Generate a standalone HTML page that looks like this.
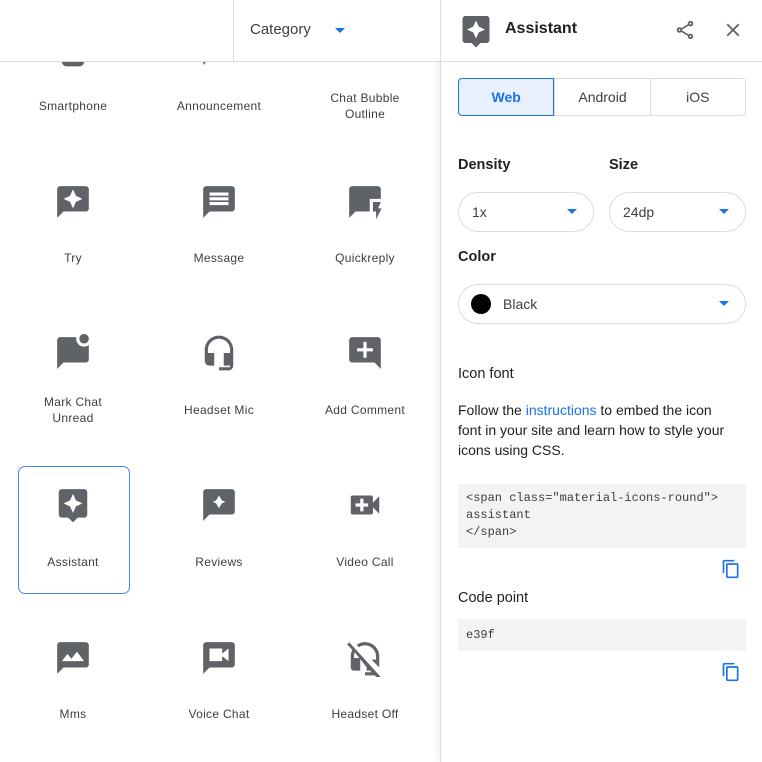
<!DOCTYPE html>
<html><head><meta charset="utf-8"><style>
*{box-sizing:border-box;margin:0;padding:0}
body{width:762px;height:762px;overflow:hidden;background:#fff;font-family:"Liberation Sans",Arial,sans-serif;position:relative;color:#202124}
.left{position:absolute;left:0;top:0;width:440px;height:762px;overflow:hidden}
.hdr{position:absolute;left:0;top:0;width:440px;height:62px;background:#fff;border-bottom:1px solid #dadce0;z-index:2}
.vd{position:absolute;left:233px;top:0;width:1px;height:61px;background:#dadce0}
.cat{position:absolute;left:250px;top:21px;font-size:15px;color:#3c4043}
.tri{position:absolute;width:0;height:0;border-left:5px solid transparent;border-right:5px solid transparent;border-top:5px solid #1a73e8}
.cell{position:absolute;width:112px;text-align:center}
.cell svg{position:absolute;left:37px;width:38px;height:38px;fill:#5f6368}
.lbl{position:absolute;left:0;width:112px;font-size:12px;color:#3c4043;line-height:16px;letter-spacing:.3px}
.sel{position:absolute;left:18px;top:466px;width:112px;height:128px;border:1px solid #4285f4;border-radius:7px}
.right{position:absolute;left:440px;top:0;width:322px;height:762px;border-left:1px solid #dadce0;box-shadow:-3px 0 5px rgba(0,0,0,.05);background:#fff}
.rh{position:absolute;left:0;top:61px;width:322px;height:1px;background:#dadce0}
.tabs{position:absolute;left:17px;top:78px;width:288px;height:38px;border:1px solid #dadce0;border-radius:4px;display:flex;font-size:14px;color:#3c4043}
.tabs div{flex:1;text-align:center;line-height:36px;border-left:1px solid #dadce0}
.tabs div:first-child{border:1px solid #1a73e8;background:#e8f0fe;color:#1a73e8;font-weight:bold;border-radius:4px 0 0 4px;margin:-1px 0 -1px -1px;line-height:36px}
.h{position:absolute;font-size:14.5px;font-weight:bold;color:#202124}
.s{position:absolute;height:40px;border:1px solid #dadce0;border-radius:20px;font-size:14px;color:#3c4043;line-height:38px;padding-left:13px}
.p{position:absolute;left:17px;top:400px;width:276px;font-size:14px;line-height:20px;color:#202124}
.code{position:absolute;left:17px;width:288px;background:#f1f3f4;font-family:"Liberation Mono",monospace;font-size:12px;color:#3c4043;padding-left:8px;line-height:17px}
.cp{position:absolute;width:20px;height:20px}
</style></head><body>
<div class="left">
<div class="hdr"><div class="vd"></div><div class="cat">Category</div><div class="tri" style="left:335px;top:28px"></div></div>

<div class="cell" style="left:17px;top:0"><svg viewBox="0 0 24 24" style="top:30px"><path d="M16 1H8C6.34 1 5 2.34 5 4v16c0 1.66 1.34 3 3 3h8c1.66 0 3-1.34 3-3V4c0-1.66-1.34-3-3-3z"/></svg><div class="lbl" style="top:98px">Smartphone</div></div>
<div class="cell" style="left:163px;top:0"><svg viewBox="0 0 24 24" style="top:30px"><path d="M20 2H4c-1.1 0-1.99.9-1.99 2L2 22l4-4h14c1.1 0 2-.9 2-2V4c0-1.1-.9-2-2-2z"/></svg><div class="lbl" style="top:98px">Announcement</div></div>
<div class="cell" style="left:309px;top:0"><div class="lbl" style="top:90px">Chat Bubble<br>Outline</div></div>

<div class="cell" style="left:17px;top:0"><svg viewBox="0 0 24 24" style="top:183px"><path d="M20 2H4c-1.1 0-2 .9-2 2v18l4-4h14c1.1 0 2-.9 2-2V4c0-1.1-.9-2-2-2zm-6.12 9.88L12 16l-1.88-4.12L6 10l4.12-1.88L12 4l1.88 4.12L18 10l-4.12 1.88z"/></svg><div class="lbl" style="top:250px">Try</div></div>
<div class="cell" style="left:163px;top:0"><svg viewBox="0 0 24 24" style="top:183px"><path d="M20 2H4c-1.1 0-1.99.9-1.99 2L2 22l4-4h14c1.1 0 2-.9 2-2V4c0-1.1-.9-2-2-2zm-2 12H6v-2h12v2zm0-3H6V9h12v2zm0-3H6V6h12v2z"/></svg><div class="lbl" style="top:250px">Message</div></div>
<div class="cell" style="left:309px;top:0"><svg viewBox="0 0 24 24" style="top:183px"><path d="M22 4c0-1.1-.9-2-2-2H4c-1.1 0-1.99.9-1.99 2L2 22l4-4h9v-8h7V4zM22.5 16h-2.2l1.7-4h-5v6h2v5z"/></svg><div class="lbl" style="top:250px">Quickreply</div></div>

<div class="cell" style="left:17px;top:0"><svg viewBox="0 0 24 24" style="top:334px"><path d="M22 6.98V16c0 1.1-.9 2-2 2H6l-4 4V4c0-1.1.9-2 2-2h10.1c-.06.32-.1.66-.1 1 0 2.760 2.24 5 5 5 1.13 0 2.16-.39 3-1.02zM16 3c0 1.66 1.34 3 3 3s3-1.34 3-3-1.34-3-3-3-3 1.34-3 3z"/></svg><div class="lbl" style="top:394px">Mark Chat<br>Unread</div></div>
<div class="cell" style="left:163px;top:0"><svg viewBox="0 0 24 24" style="top:334px"><path d="M12 1c-4.97 0-9 4.03-9 9v7c0 1.66 1.34 3 3 3h3v-8H5v-2c0-3.87 3.13-7 7-7s7 3.13 7 7v2h-4v8h4v1h-7v2h6c1.66 0 3-1.34 3-3V10c0-4.97-4.03-9-9-9z"/></svg><div class="lbl" style="top:402px">Headset Mic</div></div>
<div class="cell" style="left:309px;top:0"><svg viewBox="0 0 24 24" style="top:334px"><path d="M22 4c0-1.1-.9-2-2-2H4c-1.1 0-2 .9-2 2v12c0 1.1.9 2 2 2h14l4 4V4zm-5 7h-4v4h-2v-4H7V9h4V5h2v4h4v2z"/></svg><div class="lbl" style="top:402px">Add Comment</div></div>

<div class="sel"></div>
<div class="cell" style="left:17px;top:0"><svg viewBox="0 0 24 24" style="top:486px"><path d="M19 2H5c-1.11 0-2 .9-2 2v14c0 1.1.89 2 2 2h4l3 3 3-3h4c1.1 0 2-.9 2-2V4c0-1.1-.9-2-2-2zm-5.12 10.88L12 17l-1.88-4.12L6 11l4.12-1.88L12 5l1.88 4.12L18 11l-4.12 1.88z"/></svg><div class="lbl" style="top:554px">Assistant</div></div>
<div class="cell" style="left:163px;top:0"><svg viewBox="0 0 24 24" style="top:486px"><path d="M20 2H4c-1.1 0-1.99.9-1.99 2L2 22l4-4h14c1.1 0 2-.9 2-2V4c0-1.1-.9-2-2-2zm-6.12 8.88L12 14l-1.880-3.12L8 10l2.12-.88L12 6l1.88 3.12L16 10l-2.12.88z"/></svg><div class="lbl" style="top:554px">Reviews</div></div>
<div class="cell" style="left:309px;top:0"><svg viewBox="0 0 24 24" style="top:486px"><path d="M17 10.5V7c0-.55-.45-1-1-1H4c-.55 0-1 .45-1 1v10c0 .55.45 1 1 1h12c.55 0 1-.45 1-1v-3.5l4 4v-11l-4 4zM14 13h-3v3H9v-3H6v-2h3V8h2v3h3v2z"/></svg><div class="lbl" style="top:554px">Video Call</div></div>

<div class="cell" style="left:17px;top:0"><svg viewBox="0 0 24 24" style="top:639px"><path d="M20 2H4c-1.1 0-1.99.9-1.99 2L2 22l4-4h14c1.1 0 2-.9 2-2V4c0-1.1-.9-2-2-2zM5 14l3.5-4.5 2.5 3.01L14.5 8l4.5 6H5z"/></svg><div class="lbl" style="top:706px">Mms</div></div>
<div class="cell" style="left:163px;top:0"><svg viewBox="0 0 24 24" style="top:639px"><path d="M20 2H4c-1.1 0-1.99.9-1.99 2L2 22l4-4h14c1.1 0 2-.9 2-2V4c0-1.1-.9-2-2-2zm-2 12l-4-3.2V14H6V6h8v3.2L18 6v8z"/></svg><div class="lbl" style="top:706px">Voice Chat</div></div>
<div class="cell" style="left:309px;top:0"><svg viewBox="0 0 24 24" style="top:639px"><path d="M12 4c3.87 0 7 3.13 7 7v2h-2.92L21 17.92V11c0-4.97-4.03-9-9-9-1.95 0-3.76.62-5.23 1.68l1.44 1.44C9.3 4.41 10.6 4 12 4zM2.1 2.1L.69 3.51l3.33 3.33C3.37 8.09 3 9.5 3 11v7c0 1.1.9 2 2 2h4v-8H5v-1c0-.94.19-1.83.52-2.65L13 17.83V20h2.17l1 1H12v2h6.17l2.31 2.31 1.41-1.41L2.1 2.1z"/></svg><div class="lbl" style="top:706px">Headset Off</div></div>
</div>

<div class="right">
<svg viewBox="0 0 24 24" style="position:absolute;left:17px;top:13px;width:36px;height:36px;fill:#5f6368"><path d="M19 2H5c-1.11 0-2 .9-2 2v14c0 1.1.89 2 2 2h4l3 3 3-3h4c1.1 0 2-.9 2-2V4c0-1.1-.9-2-2-2zm-5.12 10.88L12 17l-1.88-4.12L6 11l4.12-1.88L12 5l1.88 4.12L18 11l-4.12 1.88z"/></svg>
<div style="position:absolute;left:64px;top:20px;font-size:16px;font-weight:bold;color:#202124">Assistant</div>
<svg viewBox="0 0 24 24" style="position:absolute;left:233px;top:19px;width:22px;height:22px;fill:#5f6368"><path d="M18 16.08c-.76 0-1.44.3-1.96.77L8.91 12.7c.05-.23.09-.46.09-.7s-.04-.47-.09-.7l7.05-4.11c.54.5 1.25.81 2.04.81 1.66 0 3-1.34 3-3s-1.34-3-3-3-3 1.34-3 3c0 .24.04.47.09.7L8.04 9.81C7.5 9.31 6.79 9 6 9c-1.66 0-3 1.34-3 3s1.34 3 3 3c.79 0 1.5-.31 2.04-.81l7.12 4.16c-.05.21-.08.43-.08.65 0 1.61 1.31 2.92 2.92 2.92s2.92-1.31 2.92-2.92-1.31-2.92-2.92-2.92zM18 4c.55 0 1 .45 1 1s-.45 1-1 1-1-.45-1-1 .45-1 1-1zM6 13c-.55 0-1-.45-1-1s.45-1 1-1 1 .45 1 1-.45 1-1 1zm12 7.02c-.55 0-1-.45-1-1s.45-1 1-1 1 .45 1 1-.45 1-1 1z"/></svg>
<svg viewBox="0 0 24 24" style="position:absolute;left:281px;top:19px;width:22px;height:22px;fill:#5f6368"><path d="M19 6.41L17.59 5 12 10.59 6.41 5 5 6.41 10.59 12 5 17.59 6.41 19 12 13.41 17.59 19 19 17.590 13.41 12z"/></svg>
<div class="rh"></div>
<div class="tabs"><div>Web</div><div>Android</div><div>iOS</div></div>
<div class="h" style="left:17px;top:157px">Density</div>
<div class="h" style="left:168px;top:157px">Size</div>
<div class="s" style="left:17px;top:192px;width:136px">1x</div><div class="tri" style="left:126px;top:209px"></div>
<div class="s" style="left:168px;top:192px;width:137px">24dp</div><div class="tri" style="left:278px;top:209px"></div>
<div class="h" style="left:17px;top:249px">Color</div>
<div class="s" style="left:17px;top:284px;width:288px;padding-left:44px">Black</div>
<div style="position:absolute;left:30px;top:294px;width:20px;height:20px;border-radius:50%;background:#000"></div>
<div class="tri" style="left:278px;top:301px"></div>
<div class="h" style="left:17px;top:366px;font-weight:normal">Icon font</div>
<div class="p">Follow the <span style="color:#1a73e8">instructions</span> to embed the icon font in your site and learn how to style your icons using CSS.</div>
<div class="code" style="top:484px;height:64px;padding-top:6px">&lt;span class="material-icons-round"&gt;<br>assistant<br>&lt;/span&gt;</div>
<svg class="cp" viewBox="0 0 24 24" style="left:280px;top:559px;fill:#1a73e8"><path d="M16 1H4c-1.1 0-2 .9-2 2v14h2V3h12V1zm3 4H8c-1.1 0-2 .9-2 2v14c0 1.1.9 2 2 2h11c1.1 0 2-.9 2-2V7c0-1.1-.9-2-2-2zm0 16H8V7h11v14z"/></svg>
<div class="h" style="left:17px;top:590px;font-weight:normal">Code point</div>
<div class="code" style="top:619px;height:32px;line-height:32px">e39f</div>
<svg class="cp" viewBox="0 0 24 24" style="left:280px;top:662px;fill:#1a73e8"><path d="M16 1H4c-1.1 0-2 .9-2 2v14h2V3h12V1zm3 4H8c-1.1 0-2 .9-2 2v14c0 1.1.9 2 2 2h11c1.1 0 2-.9 2-2V7c0-1.1-.9-2-2-2zm0 16H8V7h11v14z"/></svg>
</div>
</body></html>
